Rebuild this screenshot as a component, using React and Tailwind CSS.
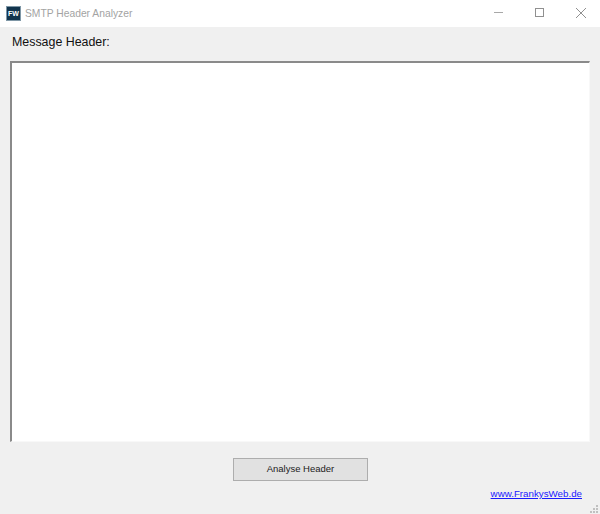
import React from "react";

const Grip = () => (
  <svg width="12" height="12" viewBox="0 0 12 12" className="absolute right-0 bottom-0">
    <g fill="#c0c0c0">
      <rect x="8" y="3" width="2" height="2" />
      <rect x="5" y="6" width="2" height="2" />
      <rect x="8" y="6" width="2" height="2" />
      <rect x="2" y="9" width="2" height="2" />
      <rect x="5" y="9" width="2" height="2" />
      <rect x="8" y="9" width="2" height="2" />
    </g>
  </svg>
);

const TitleBar = () => (
  <div className="flex h-[27px] items-center bg-white pl-[6px]">
    <div className="flex h-[15px] w-[15px] items-center justify-center border border-[#7f97a6] bg-[#12344d] text-[7px] font-bold leading-none text-white">
      FW
    </div>
    <span className="ml-[4px] text-[10.3px] text-[#a3a3a3]">SMTP Header Analyzer</span>
    <div className="ml-auto mb-[2px] flex items-center">
      <svg width="9" height="9" viewBox="0 0 9 9" className="mr-[32px]">
        <path d="M0 4.5h9" stroke="#a8a8a8" strokeWidth="1" />
      </svg>
      <svg width="9" height="9" viewBox="0 0 9 9" className="mr-[32px]">
        <rect x="0.5" y="0.5" width="8" height="8" fill="none" stroke="#909090" />
      </svg>
      <svg width="10" height="10" viewBox="0 0 10 10" className="mr-[14px]">
        <path d="M0 0l10 10M10 0L0 10" stroke="#909090" strokeWidth="1" fill="none" />
      </svg>
    </div>
  </div>
);

export default function App() {
  return (
    <div className="relative flex h-[514px] w-[600px] flex-col overflow-hidden bg-[#f0f0f0] font-['Liberation_Sans',Arial,sans-serif]">
      <TitleBar />
      <div className="pl-[12px] pt-[8px] text-[12.4px] leading-[15px] text-[#111]">Message Header:</div>
      <textarea
        className="mx-[10px] mt-[11px] h-[381px] w-[580px] resize-none border-2 border-r border-b border-t-[#8a8a8a] border-l-[#8a8a8a] border-r-[#f8f8f8] border-b-[#f8f8f8] bg-white outline-none"
        readOnly
      />
      <div className="mt-[16px] flex justify-center pl-[1px]">
        <button className="h-[23px] w-[135px] border border-[#adadad] bg-[#e1e1e1] text-[9.5px] text-[#222]">
          Analyse Header
        </button>
      </div>
      <div className="mt-[6px] pr-[18px] text-right text-[9.75px] leading-[13px]">
        <a href="#" className="text-[#1a1aff] underline">www.FrankysWeb.de</a>
      </div>
      <Grip />
    </div>
  );
}
